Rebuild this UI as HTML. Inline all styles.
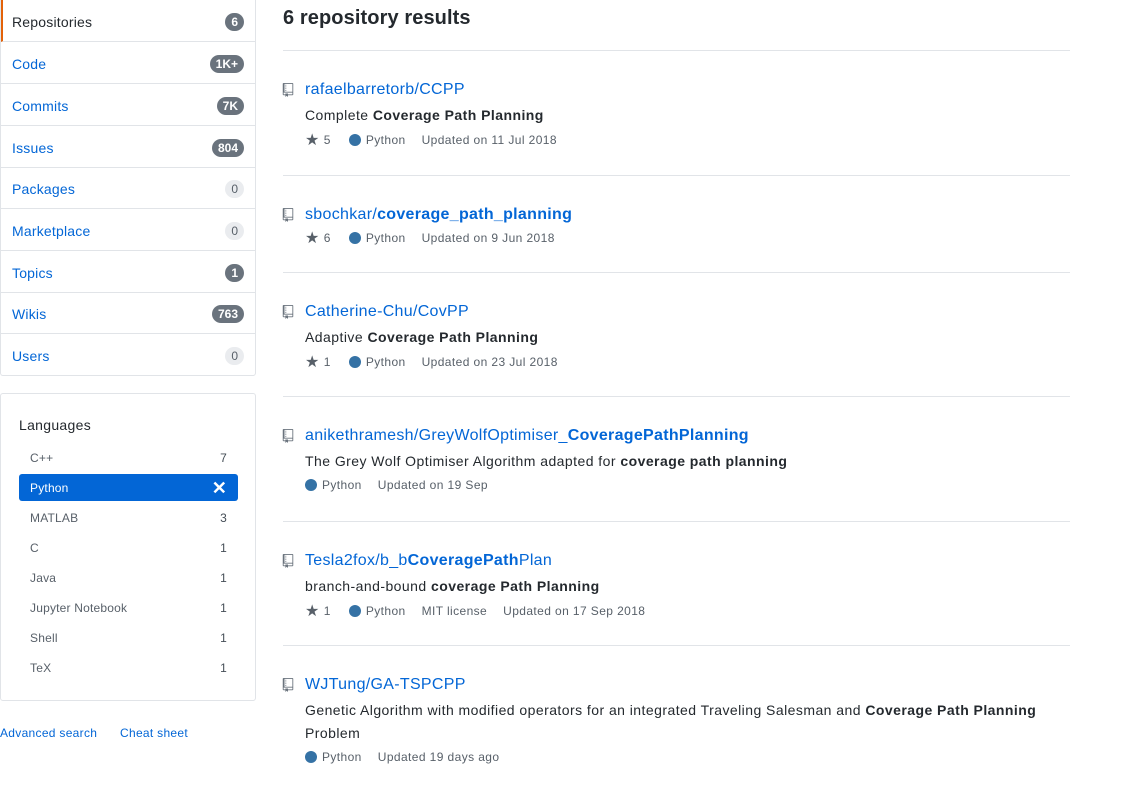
<!DOCTYPE html>
<html><head><meta charset="utf-8"><style>
*{box-sizing:border-box;margin:0;padding:0}
body{width:1131px;height:794px;background:#fff;font-family:"Liberation Sans",sans-serif;color:#24292e;position:relative;overflow:hidden}
.a{position:absolute;white-space:nowrap}
.nav{position:absolute;left:0;top:0;width:256px;height:376px;border:1px solid #e1e4e8;border-top:none;border-radius:0 0 3px 3px}
.row{position:absolute;left:0;width:254px;height:42px;border-bottom:1px solid #e1e4e8;font-size:14px;color:#0366d6;padding-left:11px;line-height:44px;letter-spacing:.2px}
.row.sel{color:#24292e;border-left:2px solid #e36209;padding-left:9px}
.cnt{position:absolute;right:11px;top:13px;height:18px;line-height:18px;padding:0 6px;border-radius:9px;background:#6a737d;color:#fff;font-size:12px;font-weight:bold;letter-spacing:0}
.cnt.z{background:#eaecef;color:#586069;font-weight:normal}
.lang{position:absolute;left:0;top:393px;width:256px;height:308px;border:1px solid #e1e4e8;border-radius:3px}
.li{position:absolute;left:18px;width:219px;height:28px;font-size:12px;color:#586069;padding-left:11px;line-height:30px;letter-spacing:.2px}
.li span{position:absolute;right:11px;top:0;color:#444d56}
.hr{position:absolute;left:283px;width:787px;height:1px;background:#e1e4e8}
.t{font-size:16px;color:#0366d6;letter-spacing:.3px}
.d{font-size:14px;color:#24292e;letter-spacing:.45px}
.m{font-size:12px;color:#586069;letter-spacing:.4px}
.m i{font-style:normal;display:inline-block}
.star{font-size:16px;vertical-align:-1px;margin-right:4px}
.dot{display:inline-block;width:12px;height:12px;border-radius:50%;background:#3572a5;vertical-align:-2px;margin-right:5px}
.bk{position:absolute;left:282px;width:12px;height:14px}
</style></head><body>
<div class="nav">
<div class="row sel" style="top:0">Repositories<span class="cnt">6</span></div>
<div class="row" style="top:42px">Code<span class="cnt">1K+</span></div>
<div class="row" style="top:84px">Commits<span class="cnt">7K</span></div>
<div class="row" style="top:126px">Issues<span class="cnt">804</span></div>
<div class="row" style="top:167px">Packages<span class="cnt z">0</span></div>
<div class="row" style="top:209px">Marketplace<span class="cnt z">0</span></div>
<div class="row" style="top:251px">Topics<span class="cnt">1</span></div>
<div class="row" style="top:292px">Wikis<span class="cnt">763</span></div>
<div class="row" style="top:334px;border-bottom:none">Users<span class="cnt z">0</span></div>
</div>
<div class="lang">
<div class="a" style="left:18px;top:23px;font-size:14px;color:#24292e;letter-spacing:.3px">Languages</div>
<div class="li" style="top:49px">C++<span>7</span></div>
<div class="li" style="top:80px;background:#0366d6;color:#fff;border-radius:3px;height:27px;line-height:28px">Python<span style="color:#fff;font-size:18px;font-weight:bold">✕</span></div>
<div class="li" style="top:109px">MATLAB<span>3</span></div>
<div class="li" style="top:139px">C<span>1</span></div>
<div class="li" style="top:169px">Java<span>1</span></div>
<div class="li" style="top:199px">Jupyter Notebook<span>1</span></div>
<div class="li" style="top:229px">Shell<span>1</span></div>
<div class="li" style="top:259px">TeX<span>1</span></div>
</div>
<div class="a" style="left:0;top:726px;font-size:12px;color:#0366d6;letter-spacing:.3px">Advanced search</div>
<div class="a" style="left:120px;top:726px;font-size:12px;color:#0366d6;letter-spacing:.3px">Cheat sheet</div>

<div class="a" style="left:283px;top:7px;font-size:20px;color:#24292e;font-weight:bold;letter-spacing:.1px">6 repository results</div>
<div class="hr" style="top:50px"></div>
<div class="hr" style="top:175px"></div>
<div class="hr" style="top:272px"></div>
<div class="hr" style="top:396px"></div>
<div class="hr" style="top:521px"></div>
<div class="hr" style="top:645px"></div>

<svg class="bk" style="top:83px" viewBox="0 0 12 16"><path fill="#6a737d" d="M4 9H3V8h1v1zm0-3H3v1h1V6zm0-2H3v1h1V4zm0-2H3v1h1V2zm8-1v12c0 .55-.45 1-1 1H6v2l-1.5-1.5L3 16v-2H1c-.55 0-1-.45-1-1V1c0-.55.45-1 1-1h10c.55 0 1 .45 1 1zm-1 10H1v2h2v-1h3v1h5v-2zm0-10H2v9h9V1z"/></svg>
<div class="a t" style="left:305px;top:81px">rafaelbarretorb/CCPP</div>
<div class="a d" style="left:305px;top:107px">Complete <b>Coverage Path Planning</b></div>
<div class="a m" style="left:305px;top:130px"><span class="star">★</span>5<i style="width:18px"></i><span class="dot"></span>Python<i style="width:16px"></i>Updated on 11 Jul 2018</div>

<svg class="bk" style="top:208px" viewBox="0 0 12 16"><path fill="#6a737d" d="M4 9H3V8h1v1zm0-3H3v1h1V6zm0-2H3v1h1V4zm0-2H3v1h1V2zm8-1v12c0 .55-.45 1-1 1H6v2l-1.5-1.5L3 16v-2H1c-.55 0-1-.45-1-1V1c0-.55.45-1 1-1h10c.55 0 1 .45 1 1zm-1 10H1v2h2v-1h3v1h5v-2zm0-10H2v9h9V1z"/></svg>
<div class="a t" style="left:305px;top:206px">sbochkar/<b>coverage_path_planning</b></div>
<div class="a m" style="left:305px;top:228px"><span class="star">★</span>6<i style="width:18px"></i><span class="dot"></span>Python<i style="width:16px"></i>Updated on 9 Jun 2018</div>

<svg class="bk" style="top:305px" viewBox="0 0 12 16"><path fill="#6a737d" d="M4 9H3V8h1v1zm0-3H3v1h1V6zm0-2H3v1h1V4zm0-2H3v1h1V2zm8-1v12c0 .55-.45 1-1 1H6v2l-1.5-1.5L3 16v-2H1c-.55 0-1-.45-1-1V1c0-.55.45-1 1-1h10c.55 0 1 .45 1 1zm-1 10H1v2h2v-1h3v1h5v-2zm0-10H2v9h9V1z"/></svg>
<div class="a t" style="left:305px;top:303px">Catherine-Chu/CovPP</div>
<div class="a d" style="left:305px;top:329px">Adaptive <b>Coverage Path Planning</b></div>
<div class="a m" style="left:305px;top:352px"><span class="star">★</span>1<i style="width:18px"></i><span class="dot"></span>Python<i style="width:16px"></i>Updated on 23 Jul 2018</div>

<svg class="bk" style="top:429px" viewBox="0 0 12 16"><path fill="#6a737d" d="M4 9H3V8h1v1zm0-3H3v1h1V6zm0-2H3v1h1V4zm0-2H3v1h1V2zm8-1v12c0 .55-.45 1-1 1H6v2l-1.5-1.5L3 16v-2H1c-.55 0-1-.45-1-1V1c0-.55.45-1 1-1h10c.55 0 1 .45 1 1zm-1 10H1v2h2v-1h3v1h5v-2zm0-10H2v9h9V1z"/></svg>
<div class="a t" style="left:305px;top:427px">anikethramesh/GreyWolfOptimiser_<b>CoveragePathPlanning</b></div>
<div class="a d" style="left:305px;top:453px">The Grey Wolf Optimiser Algorithm adapted for <b>coverage path planning</b></div>
<div class="a m" style="left:305px;top:478px"><span class="dot"></span>Python<i style="width:16px"></i>Updated on 19 Sep</div>

<svg class="bk" style="top:554px" viewBox="0 0 12 16"><path fill="#6a737d" d="M4 9H3V8h1v1zm0-3H3v1h1V6zm0-2H3v1h1V4zm0-2H3v1h1V2zm8-1v12c0 .55-.45 1-1 1H6v2l-1.5-1.5L3 16v-2H1c-.55 0-1-.45-1-1V1c0-.55.45-1 1-1h10c.55 0 1 .45 1 1zm-1 10H1v2h2v-1h3v1h5v-2zm0-10H2v9h9V1z"/></svg>
<div class="a t" style="left:305px;top:552px">Tesla2fox/b_b<b>CoveragePath</b>Plan</div>
<div class="a d" style="left:305px;top:578px">branch-and-bound <b>coverage Path Planning</b></div>
<div class="a m" style="left:305px;top:601px"><span class="star">★</span>1<i style="width:18px"></i><span class="dot"></span>Python<i style="width:16px"></i>MIT license<i style="width:16px"></i>Updated on 17 Sep 2018</div>

<svg class="bk" style="top:678px" viewBox="0 0 12 16"><path fill="#6a737d" d="M4 9H3V8h1v1zm0-3H3v1h1V6zm0-2H3v1h1V4zm0-2H3v1h1V2zm8-1v12c0 .55-.45 1-1 1H6v2l-1.5-1.5L3 16v-2H1c-.55 0-1-.45-1-1V1c0-.55.45-1 1-1h10c.55 0 1 .45 1 1zm-1 10H1v2h2v-1h3v1h5v-2zm0-10H2v9h9V1z"/></svg>
<div class="a t" style="left:305px;top:676px">WJTung/GA-TSPCPP</div>
<div class="a d" style="left:305px;top:702px">Genetic Algorithm with modified operators for an integrated Traveling Salesman and <b>Coverage Path Planning</b></div>
<div class="a d" style="left:305px;top:725px">Problem</div>
<div class="a m" style="left:305px;top:750px"><span class="dot"></span>Python<i style="width:16px"></i>Updated 19 days ago</div>
</body></html>
